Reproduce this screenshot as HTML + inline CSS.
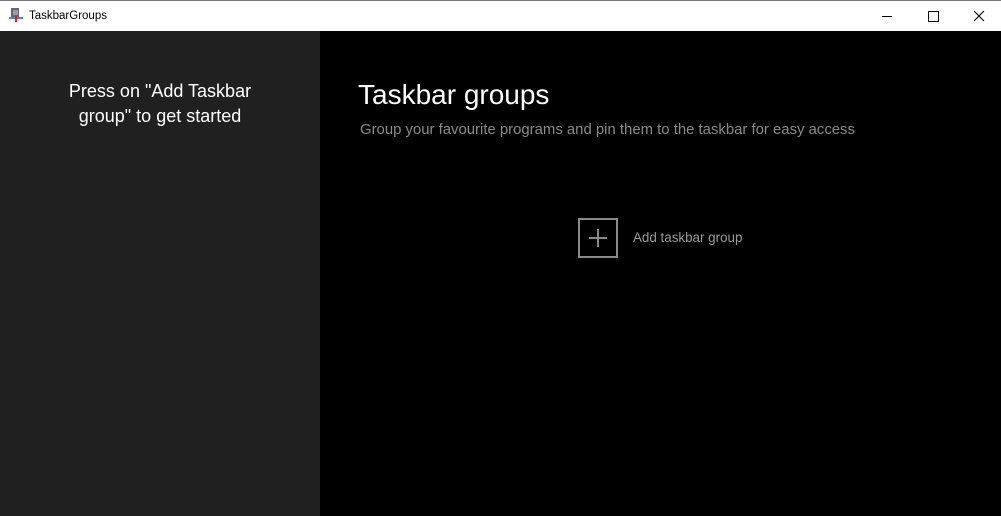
<!DOCTYPE html>
<html><head><style>
body{margin:0;width:1001px;height:516px;overflow:hidden;background:#000;font-family:"Liberation Sans",sans-serif;position:relative}
.tb{position:absolute;left:0;top:0;width:1001px;height:31px;background:#fff;border-top:1px solid #777;box-sizing:border-box}
.side{position:absolute;left:0;top:31px;width:320px;height:485px;background:#202020}
.t{position:absolute;white-space:nowrap}
</style></head><body>
<div class="tb">
<svg style="position:absolute;left:8px;top:6px" width="16" height="16" viewBox="0 0 16 16"><rect x="3" y="1" width="8" height="9" fill="#667"/><rect x="5" y="3" width="5" height="5" fill="#99a"/><rect x="1" y="10" width="14" height="2" fill="#48c"/><rect x="7" y="9" width="2" height="6" fill="#d22"/></svg>
<div class="t" style="left:29px;top:9px;font-size:11.5px;color:#000">TaskbarGroups</div>
<div style="position:absolute;left:882px;top:15px;width:10px;height:1px;background:#000"></div>
<div style="position:absolute;left:928px;top:10px;width:9px;height:9px;border:1px solid #000"></div>
<svg style="position:absolute;left:973px;top:9px" width="12" height="12"><path d="M1 1L11 11M11 1L1 11" stroke="#000" stroke-width="1.1"/></svg>
</div>
<div class="side"></div>
<div class="t" style="left:0;width:320px;top:79px;text-align:center;font-size:18px;line-height:25px;color:#fff">Press on "Add Taskbar<br>group" to get started</div>
<div class="t" style="left:358px;top:79px;font-size:28px;color:#fff">Taskbar groups</div>
<div class="t" style="left:360px;top:122px;font-size:14.9px;color:#8a8a8a">Group your favourite programs and pin them to the taskbar for easy access</div>
<div style="position:absolute;left:578px;top:218px;width:36px;height:36px;border:2px solid #8a8a8a"></div>
<div style="position:absolute;left:589px;top:237px;width:18px;height:2px;background:#8a8a8a"></div>
<div style="position:absolute;left:597px;top:229px;width:2px;height:18px;background:#8a8a8a"></div>
<div class="t" style="left:633px;top:230px;font-size:13.4px;color:#9a9a9a">Add taskbar group</div>
</body></html>
